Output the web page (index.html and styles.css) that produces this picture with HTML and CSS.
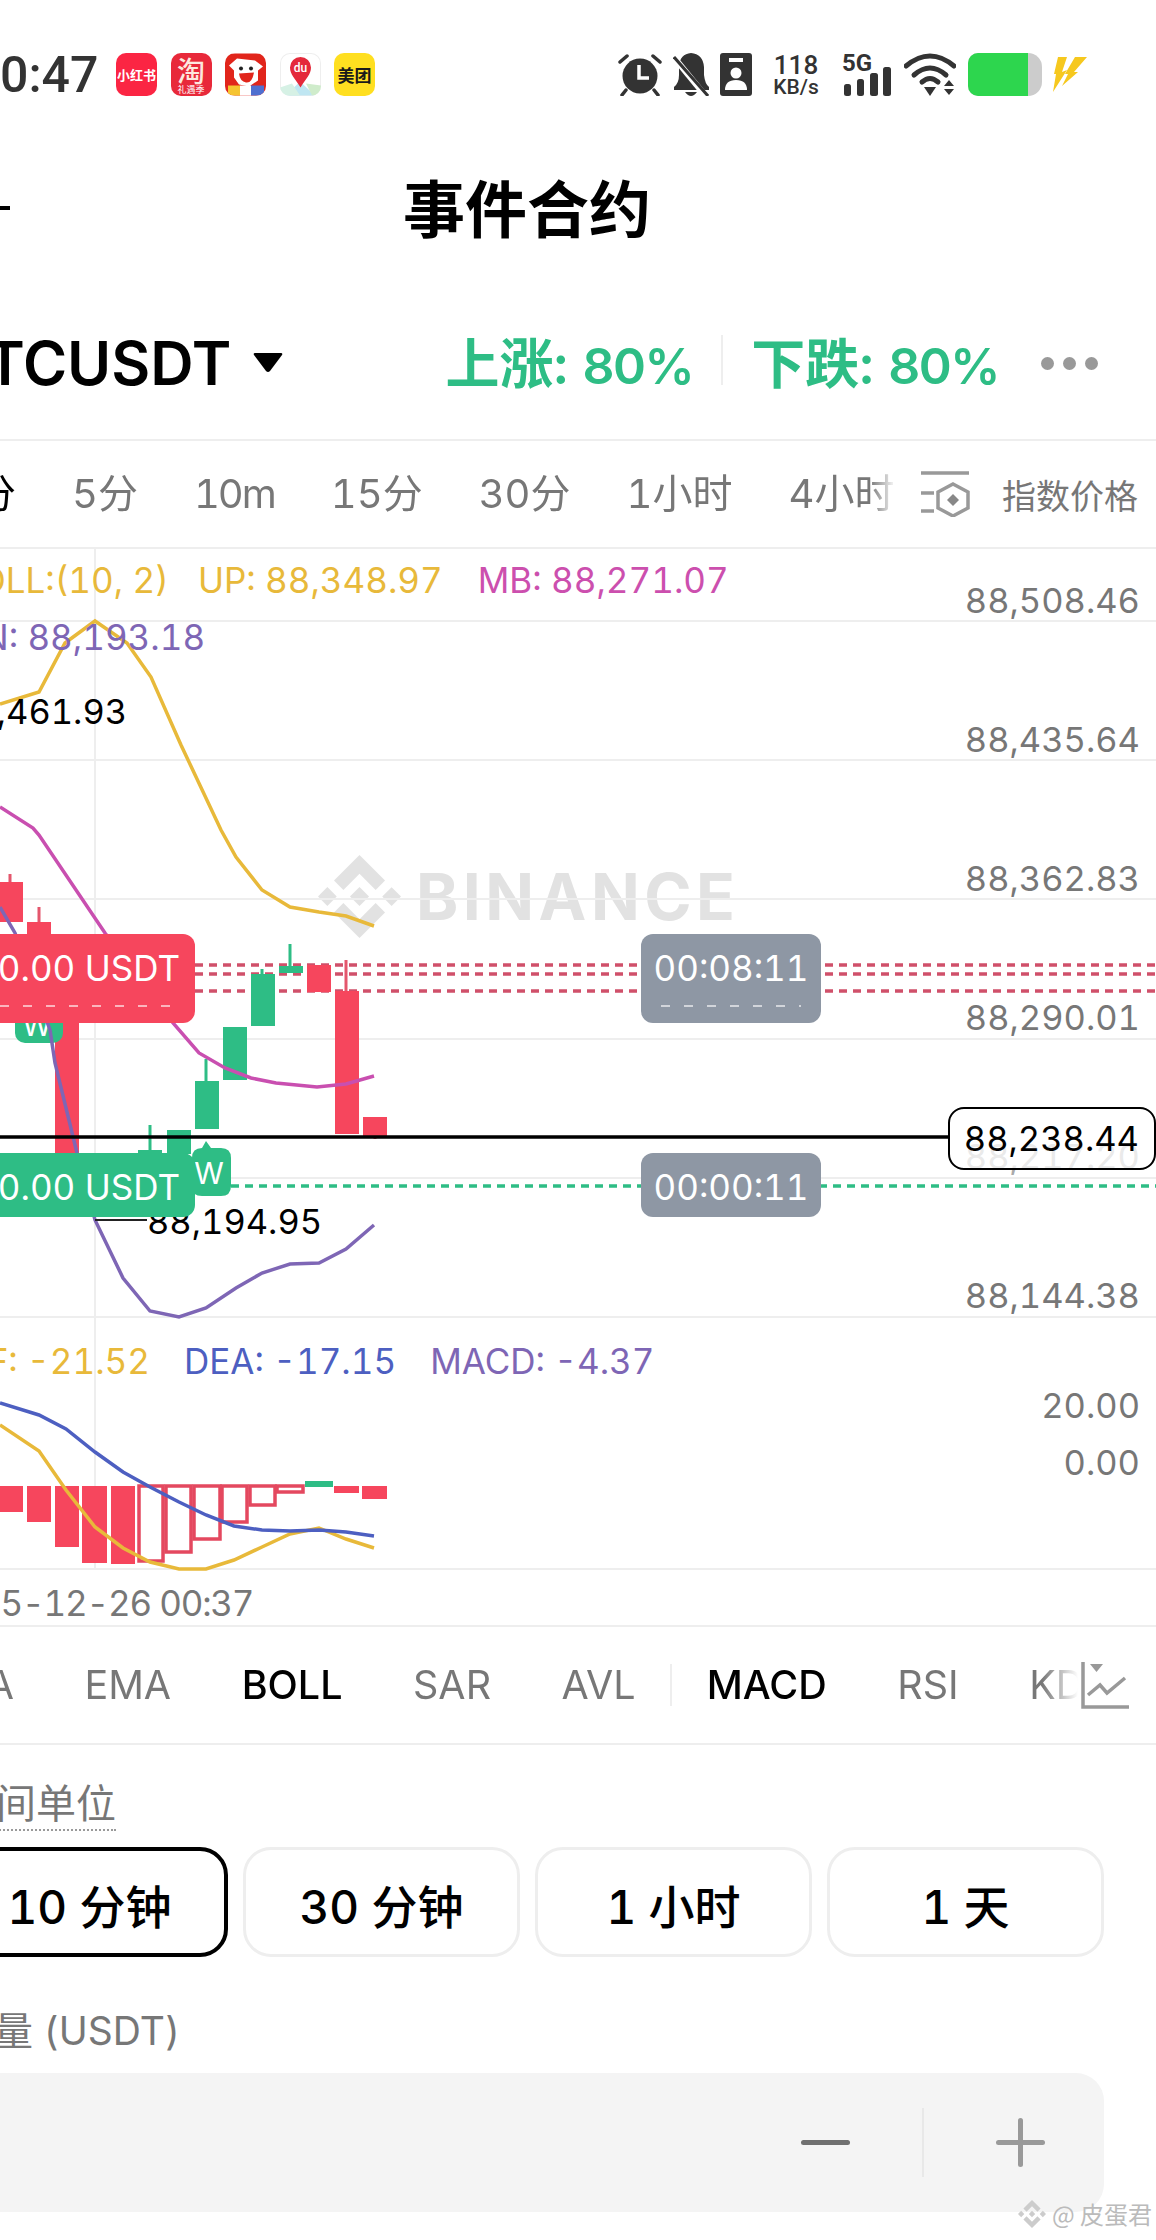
FILE: index.html
```html
<!DOCTYPE html>
<html lang="zh-CN">
<head>
  <meta charset="UTF-8" />
  <meta name="viewport" content="width=device-width, initial-scale=1.0"/>
  <title>事件合约</title>
  <link rel="stylesheet" href="styles.css">
</head>
<body>

  <div class="page">
    <!-- Status bar -->
    <div class="status">
      <span class="time">0:47</span>
      <div class="apps">
        <div class="app app-red">小红书</div>
        <div class="app app-taobao"><span>淘</span><small>礼遇季</small></div>
        <div class="app app-jd">
          <svg viewBox="0 0 41 42">
            <rect width="41" height="42" fill="#e1251b"/>
            <rect x="3" y="32" width="12" height="10" fill="#f5c431"/>
            <rect x="15" y="32" width="11" height="10" fill="#fff"/>
            <rect x="26" y="32" width="13" height="10" fill="#4f6fd0"/>
            <path d="M4 12 L12 5 L30 7 L38 13 L33 17 L33 27 L24 33 L14 31 L9 24 L9 17z" fill="#fff"/>
            <circle cx="16" cy="15" r="2" fill="#222"/>
            <circle cx="26" cy="15" r="2" fill="#222"/>
            <path d="M14 20 L29 19 Q27 30 21 29 Q15 28 14 20z" fill="#e1251b"/>
          </svg>
        </div>
        <div class="app app-du">
          <svg viewBox="0 0 41 42">
            <path d="M6 42 L20 28 L35 42z" fill="#bfe6f2"/>
            <path d="M0 34 L12 30 L20 42 L0 42z" fill="#d6f1e5"/>
            <path d="M26 30 L41 32 L41 42 L32 42z" fill="#cfeccb"/>
            <path d="M20.500 34 C15 25 10 21 10 14 A10.500 10.500 0 0 1 31 14 C31 21 26 25 20.500 34z" fill="#e4293b"/>
            <text x="20.500" y="18" class="du-text">du</text>
          </svg>
        </div>
        <div class="app app-mt">美团</div>
      </div>

      <div class="status-right">
        <svg class="ic-alarm" viewBox="0 0 44 43">
          <circle cx="22" cy="23" r="17.500" fill="#333"/>
          <path d="M2 9 L9 3 M42 9 L35 3 M8 37 L4 42 M36 37 L40 42" stroke="#333" stroke-width="3.500" stroke-linecap="round" fill="none"/>
          <path d="M21 12 V25 H31" stroke="#fff" stroke-width="3.500" fill="none"/>
        </svg>
        <svg class="ic-bell" viewBox="0 0 36 43">
          <path d="M1 34 Q6 30 6 22 V13 Q7 1 18 0 Q30 1 31 14 V22 Q32 31 36 34 L36 37 H1z" fill="#333"/>
          <path d="M12 39 H24 Q21 43 18 43 Q15 43 12 39z" fill="#333"/>
          <path d="M-1 2 L35 46" stroke="#fff" stroke-width="6"/>
          <path d="M1 4 L35 43" stroke="#333" stroke-width="3"/>
        </svg>
        <svg class="ic-card" viewBox="0 0 32 43">
          <rect width="32" height="43" rx="3" fill="#333"/>
          <rect x="9" y="5" width="14" height="4" fill="#fff"/>
          <circle cx="16" cy="20" r="5.500" fill="#fff"/>
          <path d="M5 37 Q5 27 16 27 Q27 27 27 37z" fill="#fff"/>
        </svg>
        <div class="speed"><b>118</b><span>KB/s</span></div>
        <div class="signal">
          <span class="net">5G</span>
          <svg viewBox="0 0 47 29">
            <rect x="0" y="17" width="7" height="12" rx="2.500"/>
            <rect x="13" y="12" width="7" height="17" rx="2.500"/>
            <rect x="26" y="6" width="8" height="23" rx="2.500"/>
            <rect x="39" y="0" width="8" height="29" rx="2.500"/>
          </svg>
        </div>
        <svg class="ic-wifi" viewBox="0 0 52 43">
          <path d="M2 13 Q26 -7 50 13" stroke="#333" stroke-width="5" fill="none" stroke-linecap="round"/>
          <path d="M10 22 Q26 8 42 22" stroke="#333" stroke-width="5" fill="none" stroke-linecap="round"/>
          <path d="M18 29 Q26 22 34 29" stroke="#333" stroke-width="5" fill="none" stroke-linecap="round"/>
          <path d="M20 34 H32 L26 43z" fill="#333"/>
          <path d="M40 33 L45 27 L50 33z M40 36 H50 L45 42z" fill="#333"/>
        </svg>
        <div class="battery"><div class="battery-fill"></div></div>
        <svg class="ic-bolt" viewBox="0 0 34 35">
          <path d="M5 0 L14 0 L9 15 L14 13 L0 35 L3 17 L1 17z" fill="#f6c81e"/>
          <path d="M22 0 L34 0 L21 15 L25 15 L9 29 L15 17 L12 17z" fill="#f6c81e"/>
        </svg>
      </div>
    </div>

    <!-- Title -->
    <div class="topbar">
      <div class="back"></div>
      <h1>事件合约</h1>
    </div>

    <!-- Symbol and odds -->
    <div class="symbol-row">
      <span class="symbol">BTCUSDT</span>
      <svg class="caret" viewBox="0 0 30 20"><path d="M2 0 H28 Q30 0 29 2 L17 18 Q15 20 13 18 L1 2 Q0 0 2 0z"/></svg>
      <div class="odds">
        <span>上涨: <b>80%</b></span>
        <i class="odds-sep"></i>
        <span>下跌: <b>80%</b></span>
      </div>
      <div class="dots"><i></i><i></i><i></i></div>
    </div>

    <!-- Intervals -->
    <div class="intervals">
      <div class="interval-list">
        <span class="on">1分</span>
        <span>5分</span>
        <span class="narrow">10m</span>
        <span>15分</span>
        <span>30分</span>
        <span>1小时</span>
        <span>4小时</span>
      </div>
      <svg class="ic-index" viewBox="0 0 50 46">
        <path d="M1 2 H49 M1 22 H14 M1 40 H14" stroke="#999" stroke-width="3.500" fill="none"/>
        <path d="M33 13 L48 21 V37 L33 45 L18 37 V21z" stroke="#999" stroke-width="3.500" fill="none"/>
        <path d="M33 23 L39 29 L33 35 L27 29z" fill="#888"/>
      </svg>
      <span class="index-price">指数价格</span>
    </div>

    <!-- Chart canvas -->
    <div class="chart">
      <div class="watermark">
        <svg viewBox="0 0 126.610 126.610"><path d="M38.730 53.200l24.590-24.580 24.600 24.600 14.300-14.310L63.320 0 24.420 38.900zM0 63.310l14.300-14.310 14.310 14.310-14.310 14.300zM38.730 73.410l24.590 24.590 24.600-24.600 14.310 14.290-38.900 38.910-38.910-38.880zM97.990 63.310l14.300-14.300 14.320 14.300-14.310 14.320zM77.830 63.300L63.320 48.780 52.590 59.510l-1.240 1.230-2.540 2.540 14.510 14.500 14.510-14.470z"/></svg>
        <span>BINANCE</span>
      </div>

      <svg class="plot" viewBox="0 549 1156 1078">
        <!-- grid -->
        <path class="grid" d="M0 621H1156 M0 760H1156 M0 899H1156 M0 1039H1156 M0 1178H1156 M0 1317H1156 M0 1569H1156 M95 549V1569"/>

        <!-- order lines -->
        <path class="dash-red" d="M195 965H1156 M195 974H1156 M195 991H1156"/>
        <path class="dash-green" d="M231 1186H1156"/>

        <!-- candles -->
        <g class="wick-red">
          <path d="M10 874V882 M39 907V922 M346 960V991 M375 1137V1139"/>
        </g>
        <g class="wick-green">
          <path d="M150 1125V1152 M206 1059V1081 M262 969V974 M290 944V966"/>
        </g>
        <g class="red">
          <rect x="0" y="882" width="23" height="40"/>
          <rect x="27" y="922" width="24" height="40"/>
          <rect x="55" y="934" width="24" height="225"/>
          <rect x="307" y="965" width="24" height="27"/>
          <rect x="335" y="991" width="24" height="143"/>
          <rect x="363" y="1117" width="24" height="20"/>
        </g>
        <g class="green">
          <rect x="138" y="1150" width="24" height="6"/>
          <rect x="167" y="1130" width="24" height="24"/>
          <rect x="195" y="1081" width="24" height="48"/>
          <rect x="223" y="1027" width="24" height="53"/>
          <rect x="251" y="974" width="24" height="52"/>
          <rect x="279" y="966" width="24" height="7"/>
        </g>

        <!-- W markers -->
        <rect class="green" x="15" y="1000" width="48" height="43" rx="10"/>
        <text class="marker" x="37" y="1036">W</text>
        <path class="green" d="M202 1148 L206 1141 L211 1148 H221 Q231 1148 231 1158 V1186 Q231 1196 221 1196 H202 Q192 1196 192 1186 V1158 Q192 1148 202 1148z"/>
        <text class="marker" x="209" y="1184">W</text>

        <!-- BOLL -->
        <polyline class="ln-yellow" points="0,704 39,692 65,643 95,621 127,643 151,677 181,745 221,830 236,857 262,890 290,907 319,912 346,916 374,926"/>
        <polyline class="ln-pink" points="0,807 33,828 39,835 105,933 173,1023 199,1053 225,1068 251,1078 276,1083 317,1087 346,1084 374,1076"/>
        <polyline class="ln-purple" points="0,907 15,933 50,1030 55,1063 77,1153 95,1220 123,1278 150,1311 179,1317 206,1308 236,1288 262,1273 290,1264 319,1263 346,1249 374,1225"/>

        <!-- last price -->
        <path class="last-line" d="M0 1137H948"/>
        <path class="min-line" d="M95 1220H147"/>

        <!-- MACD -->
        <g class="red">
          <rect x="0" y="1486" width="23" height="26"/>
          <rect x="27" y="1486" width="24" height="36"/>
          <rect x="55" y="1486" width="24" height="61"/>
          <rect x="82" y="1486" width="25" height="77"/>
          <rect x="111" y="1486" width="24" height="78"/>
          <rect x="334" y="1486" width="25" height="7"/>
          <rect x="362" y="1486" width="25" height="13"/>
        </g>
        <g class="hollow">
          <rect x="139" y="1486" width="24" height="75"/>
          <rect x="166" y="1486" width="25" height="66"/>
          <rect x="194" y="1486" width="26" height="53"/>
          <rect x="222" y="1486" width="25" height="36"/>
          <rect x="250" y="1486" width="25" height="19"/>
          <rect x="277" y="1486" width="26" height="6"/>
        </g>
        <rect class="green" x="305" y="1481" width="28" height="6"/>
        <polyline class="ln-macd-y" points="0,1425 39,1451 66,1490 95,1527 123,1548 150,1562 179,1569 206,1569 234,1560 262,1547 290,1534 319,1528 346,1539 374,1548"/>
        <polyline class="ln-macd-b" points="0,1403 39,1415 66,1429 95,1452 123,1472 150,1487 179,1502 206,1515 234,1526 262,1530 290,1531 319,1530 346,1532 374,1536"/>
      </svg>

      <!-- legends -->
      <div class="legend legend-boll">
        <span class="c-yellow">BOLL:(10, 2)</span>
        <span class="c-yellow pull">UP: 88,348.97</span>
        <span class="c-pink">MB: 88,271.07</span>
      </div>
      <div class="legend legend-dn"><span class="c-purple">DN: 88,193.18</span></div>
      <div class="legend legend-macd">
        <span class="c-yellow">DIF: -21.52</span>
        <span class="c-blue pull-small">DEA: -17.15</span>
        <span class="c-purple pull-small">MACD: -4.37</span>
      </div>

      <span class="extreme extreme-high">88,461.93</span>
      <span class="extreme extreme-low">88,194.95</span>

      <!-- price axis -->
      <div class="axis">
        <span>88,508.46</span>
        <span>88,435.64</span>
        <span>88,362.83</span>
        <span>88,290.01</span>
        <span class="axis-faded">88,217.20</span>
        <span>88,144.38</span>
      </div>
      <div class="axis-macd">
        <span>20.00</span>
        <span>0.00</span>
      </div>

      <!-- order labels -->
      <div class="tag tag-red tag-up">10.00 USDT<i class="peek"></i></div>
      <div class="tag tag-grey tag-up tag-time">00:08:11<i class="peek"></i></div>
      <div class="tag tag-green tag-down">10.00 USDT</div>
      <div class="tag tag-grey tag-down tag-time">00:00:11</div>

      <div class="last-price">88,238.44</div>
      <span class="date">2025-12-26 00:37</span>
    </div>

    <!-- Indicators -->
    <div class="indicators">
      <div class="indicator-list">
        <span>MA</span>
        <span>EMA</span>
        <span class="on">BOLL</span>
        <span>SAR</span>
        <span>AVL</span>
        <i class="indicator-sep"></i>
        <span class="on">MACD</span>
        <span>RSI</span>
        <span>KDJ</span>
      </div>
      <svg class="ic-settings" viewBox="0 0 48 48">
        <path d="M2 1 V46 H48" stroke="#999" stroke-width="3.500" fill="none"/>
        <path d="M7 34 L19 24 L26 32 L44 17" stroke="#999" stroke-width="3.500" fill="none"/>
        <path d="M9 3 H22 L15.500 11z" fill="#999"/>
      </svg>
    </div>

    <!-- Order form -->
    <div class="form">
      <div class="label-wrap"><span class="label label-unit">时间单位</span></div>
      <div class="units">
        <button class="unit active">10 分钟</button>
        <button class="unit">30 分钟</button>
        <button class="unit">1 小时</button>
        <button class="unit">1 天</button>
      </div>
      <div class="label-wrap"><span class="label label-amount">数量 (USDT)</span></div>
      <div class="amount">
        <i class="minus"></i>
        <i class="amount-sep"></i>
        <i class="plus"></i>
      </div>
    </div>

    <div class="credit">
      <svg viewBox="0 0 126.610 126.610"><path d="M38.730 53.200l24.590-24.580 24.600 24.600 14.300-14.310L63.320 0 24.420 38.900zM0 63.310l14.300-14.310 14.310 14.310-14.310 14.300zM38.730 73.410l24.590 24.590 24.600-24.600 14.310 14.290-38.900 38.910-38.910-38.880zM97.990 63.310l14.300-14.300 14.320 14.300-14.310 14.320zM77.830 63.300L63.320 48.780 52.590 59.510l-1.240 1.230-2.540 2.540 14.510 14.500 14.510-14.470z"/></svg>
      <span>@ 皮蛋君</span>
    </div>
  </div>

</body>
</html>
```

FILE: styles.css
```css
* {
  margin: 0;
  padding: 0;
  box-sizing: border-box;
}

body {
  background: #fff;
  font-family: Inter, "Noto Sans CJK SC", sans-serif;
  font-variant-numeric: tabular-nums;
  overflow: hidden;
}

i {
  font-style: normal;
  display: block;
}

.page {
  position: relative;
  width: 1156px;
  height: 2240px;
  overflow: hidden;
  background: #fff;
}

/* status bar */
.status {
  height: 120px;
  padding: 53px 69px 0 0;
  display: flex;
  align-items: flex-start;
}

.time {
  font-family: Roboto, sans-serif;
  font-weight: 500;
  font-size: 50px;
  line-height: 44px;
  color: #333;
  width: 116px;
}

.apps {
  display: flex;
  gap: 13.500px;
}

.app {
  position: relative;
  width: 41px;
  height: 43px;
  border-radius: 10px;
  overflow: hidden;
  display: flex;
  align-items: center;
  justify-content: center;
  font-family: "Noto Sans CJK SC", sans-serif;
}

.app svg {
  display: block;
  width: 100%;
  height: 100%;
}

.app-red {
  background: #fb2543;
  color: #fff;
  font-size: 13px;
  font-weight: 700;
  white-space: nowrap;
}

.app-taobao {
  background: #e8293a;
  color: #fff;
  flex-direction: column;
}

.app-taobao span {
  font-size: 28px;
  line-height: 30px;
  font-weight: 500;
  color: #fde8df;
}

.app-taobao small {
  font-size: 9px;
  line-height: 10px;
  white-space: nowrap;
}

.app-du {
  background: #fff;
  box-shadow: inset 0 0 0 1px #eee;
}

.du-text {
  font-family: Roboto, sans-serif;
  font-size: 12px;
  font-weight: 500;
  fill: #fff;
  text-anchor: middle;
}

.app-mt {
  background: #ffdf20;
  color: #1a1a1a;
  font-size: 17px;
  font-weight: 700;
  white-space: nowrap;
}

.status-right {
  margin-left: auto;
  display: flex;
  align-items: flex-start;
  gap: 11px;
  height: 43px;
}

.ic-alarm {
  width: 44px;
  height: 43px;
}

.ic-bell {
  width: 36px;
  height: 43px;
}

.ic-card {
  width: 32px;
  height: 43px;
}

.speed {
  width: 50px;
  margin: 0 10px 0 8px;
  display: flex;
  flex-direction: column;
  align-items: center;
  font-family: Roboto, sans-serif;
  color: #333;
}

.speed b {
  font-size: 26px;
  line-height: 24px;
  font-weight: 500;
}

.speed span {
  font-size: 21px;
  line-height: 20px;
  font-weight: 500;
  white-space: nowrap;
}

.signal {
  position: relative;
  width: 49px;
  height: 43px;
}

.net {
  position: absolute;
  left: 0;
  top: 0;
  font-family: Roboto, sans-serif;
  font-weight: 700;
  font-size: 24px;
  line-height: 20px;
  color: #333;
}

.signal svg {
  position: absolute;
  left: 2px;
  bottom: 0;
  width: 47px;
  height: 29px;
  fill: #333;
}

.ic-wifi {
  width: 52px;
  height: 43px;
  margin-left: 2px;
}

.battery {
  width: 74px;
  height: 43px;
  margin-left: 1px;
  background: #ccc;
  border-radius: 10px 14px 14px 10px;
  overflow: hidden;
}

.battery-fill {
  width: 60px;
  height: 100%;
  background: #2dd64e;
}

.ic-bolt {
  width: 34px;
  height: 35px;
  margin-top: 4px;
}

/* title */
.topbar {
  height: 171px;
  display: flex;
  align-items: center;
}

.back {
  width: 10px;
  height: 4px;
  margin-top: 4px;
  background: #000;
}

h1 {
  margin-left: 393px;
  font-family: "Noto Sans CJK SC", sans-serif;
  font-size: 62px;
  line-height: 70px;
  font-weight: 700;
  color: #000;
}

/* symbol row */
.symbol-row {
  height: 150px;
  padding: 0 58px 4px 0;
  display: flex;
  align-items: center;
  border-bottom: 2px solid #eee;
}

.symbol {
  margin-left: -51px;
  font-size: 60px;
  font-weight: 600;
  color: #000;
  white-space: nowrap;
}

.caret {
  width: 30px;
  height: 20px;
  margin-left: 22px;
}

.odds {
  margin-left: auto;
  margin-bottom: 6px;
  display: flex;
  align-items: center;
  gap: 28px;
  font-size: 54px;
  font-weight: 600;
  color: #2ebd85;
  white-space: nowrap;
}

.odds b {
  font-size: 50px;
  font-weight: 600;
  letter-spacing: -1.500px;
  font-variant-numeric: normal;
}

.odds-sep {
  width: 2px;
  height: 50px;
  background: #eee;
}

.dots {
  margin-left: 42px;
  display: flex;
  gap: 9px;
}

.dots i {
  width: 13px;
  height: 13px;
  border-radius: 50%;
  background: #999;
}

/* intervals */
.intervals {
  height: 108px;
  display: flex;
  align-items: center;
  border-bottom: 2px solid #eee;
}

.interval-list {
  width: 896px;
  flex: none;
  display: flex;
  gap: 56px;
  overflow: hidden;
  font-size: 40px;
  line-height: 56px;
  color: #777;
  white-space: nowrap;
  -webkit-mask-image: linear-gradient(to left, transparent, #000 26px);
  mask-image: linear-gradient(to left, transparent, #000 26px);
}

.interval-list span:first-child {
  margin-left: -50px;
}

.interval-list .on {
  color: #000;
}

.interval-list .narrow {
  letter-spacing: -2px;
}

.ic-index {
  width: 50px;
  height: 46px;
  margin-left: 24px;
  flex: none;
}

.index-price {
  margin-left: 32px;
  font-size: 34px;
  color: #777;
  white-space: nowrap;
}

/* chart */
.chart {
  position: relative;
  height: 1078px;
  border-bottom: 2px solid #eee;
}

.plot {
  position: absolute;
  left: 0;
  top: 0;
  width: 1156px;
  height: 1078px;
}

.grid {
  stroke: #eee;
  stroke-width: 2;
  fill: none;
}

.red rect,
rect.red {
  fill: #f6465d;
}

.green rect,
.green {
  fill: #2ebd85;
}

.wick-red {
  stroke: #e4566c;
  stroke-width: 3;
  fill: none;
}

.wick-green {
  stroke: #2ebd85;
  stroke-width: 3;
  fill: none;
}

.hollow rect {
  fill: #fff;
  stroke: #e4485f;
  stroke-width: 3.500;
}

.dash-red {
  stroke: #d0506a;
  stroke-width: 3.500;
  stroke-dasharray: 8 6;
  fill: none;
}

.dash-green {
  stroke: #2ebd85;
  stroke-width: 3.500;
  stroke-dasharray: 8 6;
  fill: none;
}

.marker {
  font-family: Inter, sans-serif;
  font-size: 30px;
  fill: #fff;
  text-anchor: middle;
}

.ln-yellow,
.ln-macd-y {
  stroke: #e8b93a;
  stroke-width: 3.500;
  fill: none;
}

.ln-pink {
  stroke: #c94fb0;
  stroke-width: 3.500;
  fill: none;
}

.ln-purple {
  stroke: #7e66b5;
  stroke-width: 3.500;
  fill: none;
}

.ln-macd-b {
  stroke: #4d5fc1;
  stroke-width: 3.500;
  fill: none;
}

.last-line {
  stroke: #000;
  stroke-width: 3.500;
}

.min-line {
  stroke: #222;
  stroke-width: 2;
}

.watermark {
  position: absolute;
  left: 318px;
  top: 306px;
  display: flex;
  align-items: center;
  gap: 15px;
  color: #e2e2e2;
}

.watermark svg {
  width: 83px;
  height: 83px;
  fill: #e2e2e2;
}

.watermark span {
  font-size: 64px;
  font-weight: 700;
  line-height: 83px;
  letter-spacing: 4.500px;
}

.legend {
  position: absolute;
  display: flex;
  gap: 35px;
  font-size: 35px;
  line-height: 44px;
  white-space: nowrap;
}

.legend-boll {
  left: -44px;
  top: 9px;
}

.legend-dn {
  left: -43px;
  top: 66px;
}

.legend-macd {
  left: -47px;
  top: 790px;
  gap: 38px;
}

.pull {
  margin-left: -6px;
}

.pull-small {
  margin-left: -4px;
}

.c-yellow {
  color: #e8b93a;
}

.c-pink {
  color: #cc4fae;
}

.c-purple {
  color: #7e66b5;
}

.c-blue {
  color: #4d5fc1;
}

.extreme {
  position: absolute;
  font-size: 34.500px;
  line-height: 44px;
  color: #000;
  white-space: nowrap;
}

.extreme-high {
  left: -48px;
  top: 141px;
}

.extreme-low {
  left: 147px;
  top: 651px;
}

.axis {
  position: absolute;
  right: 16px;
  top: -18px;
  display: grid;
  grid-auto-rows: 139px;
  align-items: center;
  justify-items: end;
  font-size: 34.500px;
  color: #777;
}

.axis-faded {
  color: #aaa;
}

.axis-macd {
  position: absolute;
  right: 16px;
  top: 828px;
  display: grid;
  grid-auto-rows: 57px;
  align-items: center;
  justify-items: end;
  font-size: 34.500px;
  color: #777;
}

.tag {
  position: absolute;
  display: flex;
  justify-content: flex-end;
  font-size: 35px;
  color: #fff;
  white-space: nowrap;
  border-radius: 12px;
  padding-right: 15px;
}

.tag-up {
  top: 385px;
  height: 89px;
  line-height: 68px;
}

.tag-down {
  top: 604px;
  height: 64px;
  line-height: 68px;
}

.tag-red {
  left: -40px;
  width: 235px;
  background: #f6465d;
}

.tag-green {
  left: -40px;
  width: 235px;
  background: #2ebd85;
}

.tag-grey {
  left: 641px;
  width: 180px;
  background: #8e97a4;
}

.tag-time {
  padding: 0;
  justify-content: center;
}

.peek {
  position: absolute;
  left: 40px;
  right: 22px;
  top: 71px;
  height: 2px;
  background: repeating-linear-gradient(to right, rgba(255, 255, 255, 0.6) 0 9px, transparent 9px 23px);
}

.tag-time .peek {
  left: 20px;
  right: 20px;
}

.last-price {
  position: absolute;
  right: 0;
  top: 558px;
  width: 208px;
  height: 63px;
  padding-right: 15px;
  display: flex;
  align-items: center;
  justify-content: flex-end;
  font-size: 34.500px;
  color: #000;
  background: rgba(255, 255, 255, 0.75);
  border: 2px solid #000;
  border-radius: 16px;
}

.date {
  position: absolute;
  left: -64px;
  top: 1032px;
  font-size: 35px;
  line-height: 44px;
  letter-spacing: -1.200px;
  color: #777;
  white-space: nowrap;
}

/* indicators */
.indicators {
  height: 118px;
  display: flex;
  align-items: center;
  border-bottom: 2px solid #eee;
}

.indicator-list {
  width: 1078px;
  flex: none;
  display: flex;
  align-items: center;
  gap: 70.500px;
  overflow: hidden;
  font-size: 39.500px;
  color: #777;
  white-space: nowrap;
  -webkit-mask-image: linear-gradient(to left, transparent, #000 36px);
  mask-image: linear-gradient(to left, transparent, #000 36px);
}

.indicator-list span:first-child {
  margin-left: -49px;
}

.indicator-list .on {
  color: #000;
  font-weight: 500;
}

.indicator-sep {
  flex: none;
  width: 2px;
  height: 42px;
  margin: 0 -36px;
  background: #eee;
}

.ic-settings {
  width: 48px;
  height: 48px;
  margin-left: 3px;
  flex: none;
}

/* form */
.form {
  width: 1153px;
  margin-left: -49px;
}

.label-wrap {
  line-height: 0;
}

.label {
  display: inline-block;
  font-size: 40px;
  color: #777;
  white-space: nowrap;
}

.label-unit {
  margin-top: 34px;
  margin-left: 5px;
  line-height: 50px;
  border-bottom: 2px dotted #999;
}

.label-amount {
  margin-top: 51px;
  margin-left: 4px;
  font-size: 39px;
  line-height: 46px;
}

.units {
  margin-top: 16px;
  display: grid;
  grid-template-columns: repeat(4, 1fr);
  gap: 15px;
}

.unit {
  height: 110px;
  padding-top: 3px;
  background: #fff;
  border: 3px solid #eee;
  border-radius: 28px;
  font-family: Inter, "Noto Sans CJK SC", sans-serif;
  font-variant-numeric: tabular-nums;
  font-size: 46px;
  font-weight: 500;
  color: #000;
}

.unit.active {
  border: 4px solid #000;
}

.amount {
  margin-top: 19px;
  height: 139px;
  padding-right: 59px;
  display: flex;
  align-items: center;
  justify-content: flex-end;
  gap: 72px;
  background: #f4f4f4;
  border-radius: 28px;
}

.minus {
  width: 49px;
  height: 5px;
  border-radius: 3px;
  background: #707070;
}

.amount-sep {
  width: 2px;
  height: 69px;
  background: #e8e8e8;
}

.plus {
  position: relative;
  width: 49px;
  height: 49px;
}

.plus::before,
.plus::after {
  content: "";
  position: absolute;
  background: #999;
  border-radius: 3px;
}

.plus::before {
  left: 0;
  top: 22px;
  width: 49px;
  height: 5px;
}

.plus::after {
  left: 22px;
  top: 0;
  width: 5px;
  height: 49px;
}

/* repost credit */
.credit {
  position: absolute;
  left: 1018px;
  top: 2199px;
  display: flex;
  align-items: center;
  gap: 6px;
  font-family: "Noto Sans CJK SC", sans-serif;
  font-size: 24px;
  line-height: 30px;
  color: #bbb;
  white-space: nowrap;
}

.credit svg {
  width: 28px;
  height: 28px;
  fill: #ccc;
}
```
